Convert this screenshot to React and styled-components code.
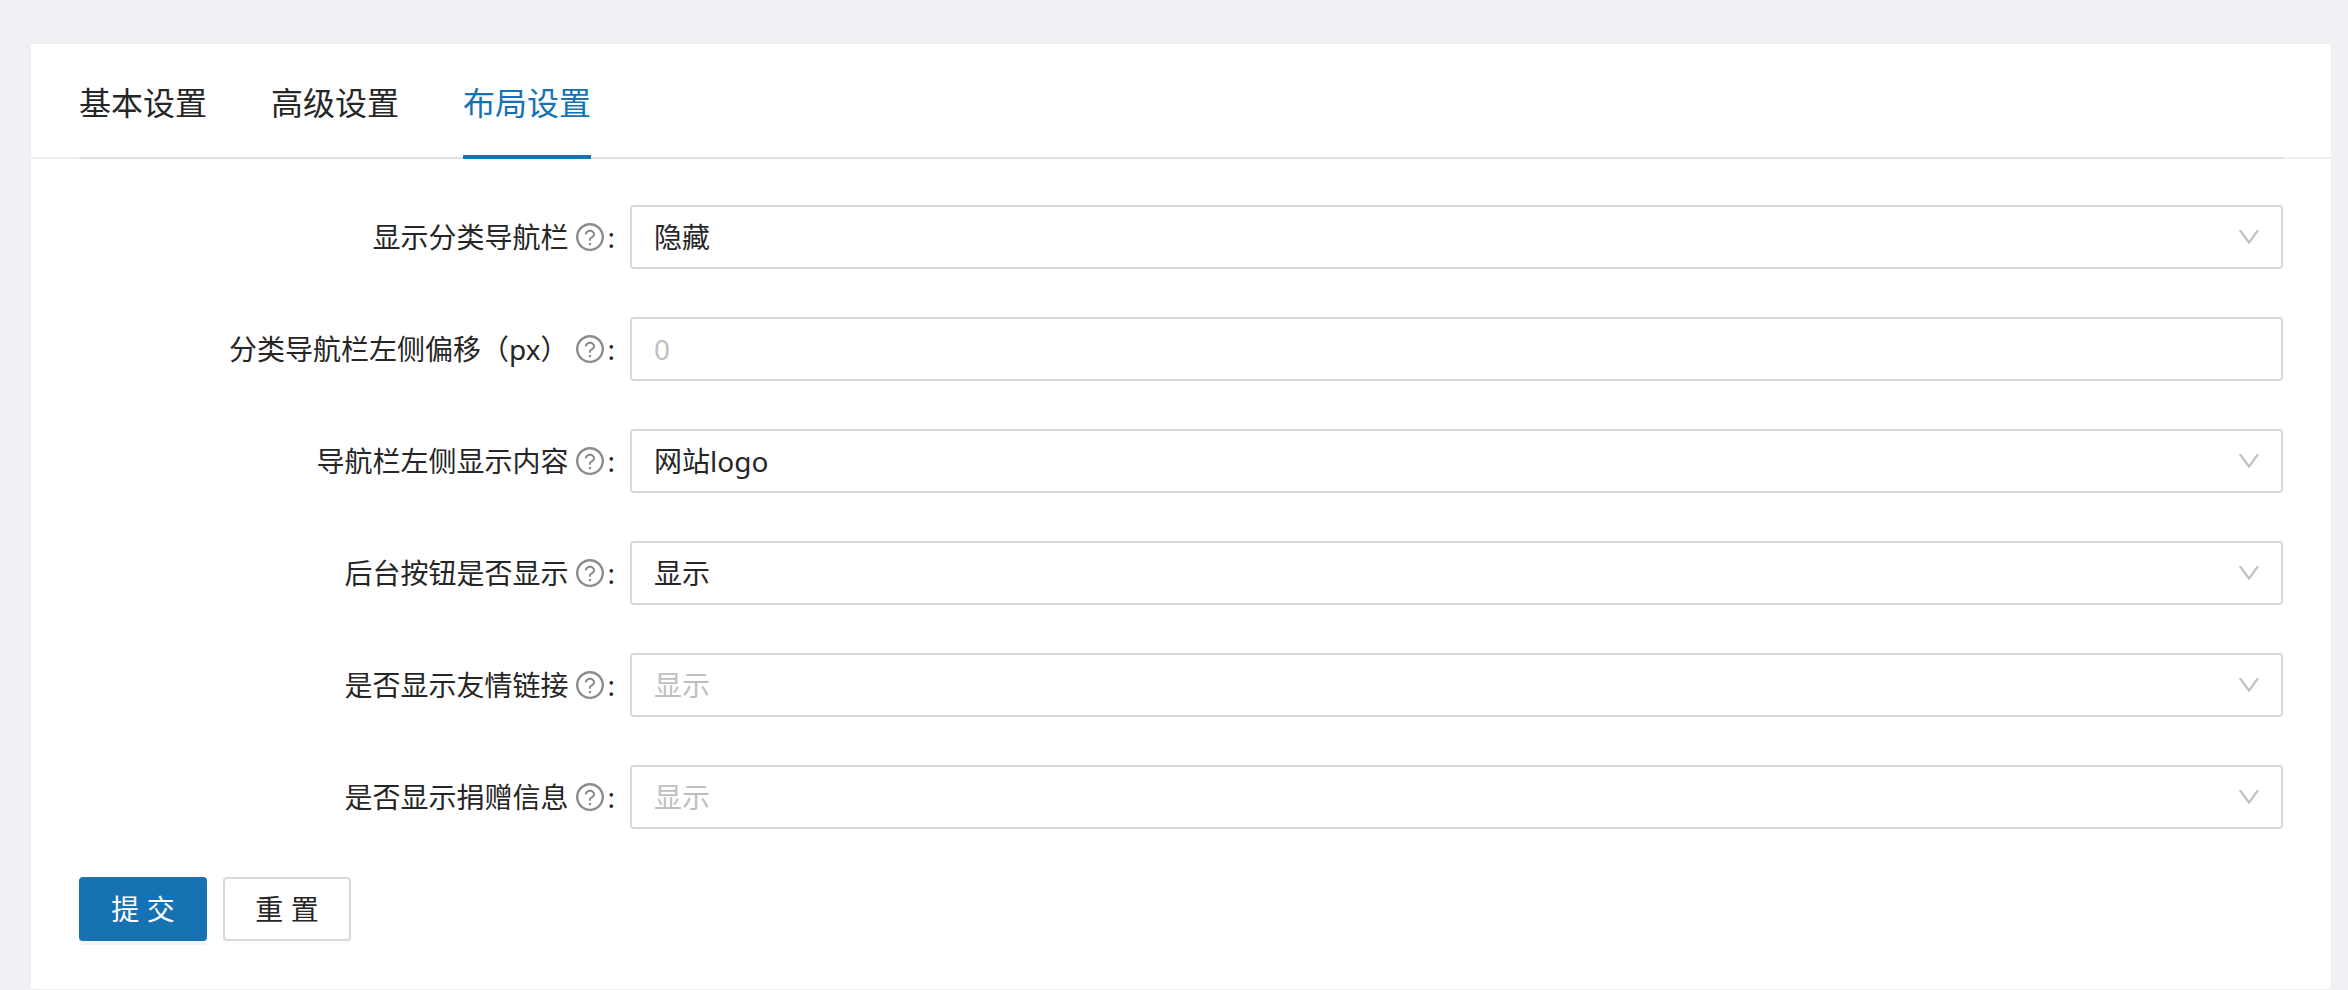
import React, { useState } from "react";
import styled, { createGlobalStyle } from "styled-components";

const GlobalStyle = createGlobalStyle`
  *, *::before, *::after { box-sizing: border-box; }
  body {
    margin: 0;
    background: #f0f1f5;
    color: #262626;
    font: 400 28px/44px "Noto Sans", "Noto Sans CJK SC", sans-serif;
  }
  button, input, select { font: inherit; color: inherit; }
`;

const Page = styled.main`
  padding: 42px 15px 0 29px;
`;

const Card = styled.section`
  background: #fff;
  border: 2px solid #f0f0f0;
  border-bottom-width: 1px;
  border-radius: 4px;
`;

const CardHead = styled.header`
  padding: 0 48px;
  border-bottom: 2px solid #f0f0f0;
`;

const TabList = styled.div`
  display: flex;
  gap: 64px;
  margin-bottom: -2px;
  border-bottom: 2px solid #e1e1e1;
`;

const Tab = styled.button`
  margin: 0 0 -2px;
  padding: 34px 0 27px;
  border: 0;
  border-bottom: 4px solid ${(p) => (p.$active ? "#1772b4" : "transparent")};
  background: none;
  color: ${(p) => (p.$active ? "#1772b4" : "#262626")};
  font-size: 32px;
  line-height: 50px;
  cursor: pointer;
`;

const Form = styled.form`
  display: flex;
  flex-direction: column;
  gap: 48px;
  padding: 46px 48px 48px;
`;

const Row = styled.div`
  display: grid;
  grid-template-columns: 1fr 3fr;
`;

const Label = styled.label`
  display: flex;
  align-items: center;
  justify-content: flex-end;
  white-space: nowrap;
`;

const HelpIcon = styled.svg`
  width: 28px;
  height: 28px;
  margin-left: 8px;
  fill: #8c8c8c;
`;

const Colon = styled.span`
  margin: 0 15px 0 3px;
`;

const Field = styled.div`
  display: grid;
  position: relative;
`;

const Control = styled.input`
  width: 100%;
  height: 64px;
  padding: 0 22px;
  border: 2px solid #d9d9d9;
  border-radius: 4px;
  background: #fff;
  color: ${(p) => (p.$empty ? "#bfbfbf" : "#262626")};
  outline: 0;
  appearance: none;

  &::placeholder { color: #bfbfbf; opacity: 1; }
  &:focus { border-color: #1772b4; }
`;

const Arrow = styled.svg`
  position: absolute;
  top: 20px;
  right: 22px;
  width: 24px;
  height: 24px;
  fill: #bfbfbf;
  pointer-events: none;
`;

const Actions = styled.div`
  display: flex;
  gap: 16px;
`;

const Button = styled.button`
  min-width: 128px;
  height: 64px;
  padding: 0 30px;
  border: 2px solid ${(p) => (p.$primary ? "#1772b4" : "#d9d9d9")};
  border-radius: 4px;
  background: ${(p) => (p.$primary ? "#1772b4" : "#fff")};
  color: ${(p) => (p.$primary ? "#fff" : "#262626")};
  box-shadow: 0 4px 0 rgba(0, 0, 0, ${(p) => (p.$primary ? 0.045 : 0.015)});
  cursor: pointer;
`;

const tabs = ["基本设置", "高级设置", "布局设置"];

const fields = [
  { id: "showSubMenu", label: "显示分类导航栏", value: "隐藏", options: ["显示", "隐藏"] },
  { id: "subMenuOffset", label: "分类导航栏左侧偏移（px）", placeholder: "0" },
  { id: "headerLeftContent", label: "导航栏左侧显示内容", value: "网站logo", options: ["网站logo", "网站名"] },
  { id: "showAdminButton", label: "后台按钮是否显示", value: "显示", options: ["显示", "隐藏"] },
  { id: "showFriends", label: "是否显示友情链接", placeholder: "显示", options: ["显示", "隐藏"] },
  { id: "showDonateInfo", label: "是否显示捐赠信息", placeholder: "显示", options: ["显示", "隐藏"] },
];

function Help() {
  return (
    <HelpIcon viewBox="64 64 896 896" aria-hidden="true">
      <path d="M512 64C264.6 64 64 264.6 64 512s200.6 448 448 448 448-200.6 448-448S759.4 64 512 64zm0 820c-205.4 0-372-166.6-372-372s166.6-372 372-372 372 166.6 372 372-166.6 372-372 372z" />
      <path d="M623.6 316.7C593.6 290.4 554 276 512 276s-81.6 14.5-111.6 40.7C369.2 344 352 380.7 352 420v7.6c0 4.4 3.6 8 8 8h48c4.4 0 8-3.6 8-8V420c0-44.1 43.1-80 96-80s96 35.9 96 80c0 31.1-22 59.6-56.1 72.7-21.2 8.1-39.2 22.3-52.1 40.9-13.1 19-19.9 41.8-19.9 64.9V620c0 4.4 3.6 8 8 8h48c4.4 0 8-3.6 8-8v-22.7a48.3 48.3 0 0130.9-44.8c59-22.7 97.1-74.7 97.1-132.5.1-39.3-17.1-76-48.3-103.3zM472 732a40 40 0 1080 0 40 40 0 10-80 0z" />
    </HelpIcon>
  );
}

function SelectField({ field }) {
  const [value, setValue] = useState(field.value || "");
  return (
    <Field>
      <Control as="select" id={field.id} value={value} $empty={!value} onChange={(e) => setValue(e.target.value)}>
        {field.placeholder && <option value="" hidden>{field.placeholder}</option>}
        {field.options.map((o) => <option key={o} value={o}>{o}</option>)}
      </Control>
      <Arrow viewBox="64 64 896 896" aria-hidden="true">
        <path d="M884 256h-75c-5.1 0-9.9 2.5-12.9 6.6L512 654.2 227.9 262.6c-3-4.1-7.8-6.6-12.9-6.6h-75c-6.5 0-10.3 7.4-6.5 12.7l352.6 486.1c12.8 17.6 39 17.6 51.7 0l352.6-486.1c3.9-5.3.1-12.7-6.4-12.7z" />
      </Arrow>
    </Field>
  );
}

export default function App() {
  const [active, setActive] = useState("布局设置");
  return (
    <Page lang="zh-CN">
      <GlobalStyle />
      <Card>
        <CardHead>
          <TabList role="tablist">
            {tabs.map((t) => (
              <Tab key={t} type="button" role="tab" aria-selected={t === active} $active={t === active} onClick={() => setActive(t)}>
                {t}
              </Tab>
            ))}
          </TabList>
        </CardHead>
        <Form onSubmit={(e) => e.preventDefault()}>
          {fields.map((f) => (
            <Row key={f.id}>
              <Label htmlFor={f.id}>
                {f.label}
                <Help />
                <Colon>:</Colon>
              </Label>
              {f.options ? (
                <SelectField field={f} />
              ) : (
                <Field>
                  <Control id={f.id} type="text" placeholder={f.placeholder} />
                </Field>
              )}
            </Row>
          ))}
          <Actions>
            <Button type="submit" $primary>提 交</Button>
            <Button type="reset">重 置</Button>
          </Actions>
        </Form>
      </Card>
    </Page>
  );
}
